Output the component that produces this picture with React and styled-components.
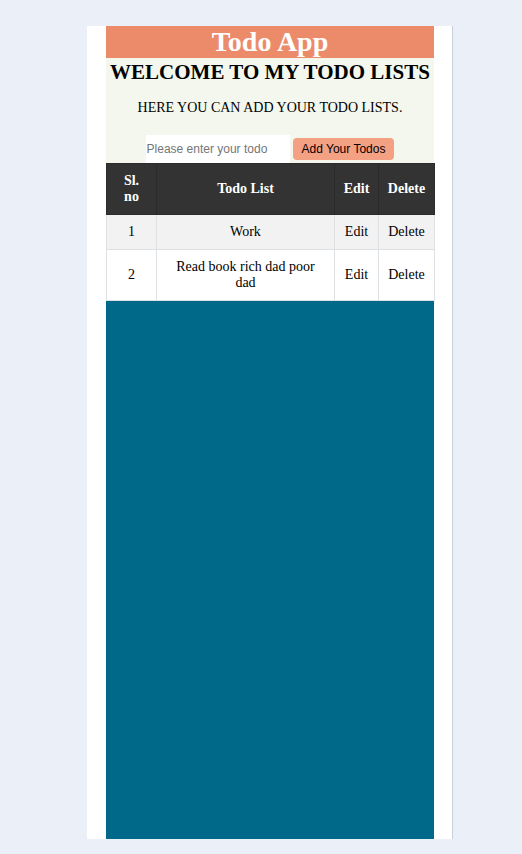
import React from "react";
import styled, { createGlobalStyle } from "styled-components";

const GlobalStyle = createGlobalStyle`
  html, body {
    margin: 0;
    padding: 0;
    background: #ebeff8;
    font-family: "Liberation Serif", "Times New Roman", serif;
  }
`;

const todos = [
  { id: 1, text: "Work" },
  { id: 2, text: "Read book rich dad poor dad" },
];

function App() {
  return (
    <>
      <GlobalStyle />
      <Page>
        <Panel>
          <Column>
            <Title>Todo App</Title>
            <Intro>
              <Welcome>WELCOME TO MY TODO LISTS</Welcome>
              <Subtitle>HERE YOU CAN ADD YOUR TODO LISTS.</Subtitle>
              <Form>
                <Input placeholder="Please enter your todo" />
                <AddButton>Add Your Todos</AddButton>
              </Form>
            </Intro>
            <Table>
              <thead>
                <tr>
                  <Th w={50}>Sl.<br />no</Th>
                  <Th w={178}>Todo List</Th>
                  <Th w={44}>Edit</Th>
                  <Th w={56}>Delete</Th>
                </tr>
              </thead>
              <tbody>
                {todos.map((t) => (
                  <Row key={t.id}>
                    <Td>{t.id}</Td>
                    <Td wide>{t.text}</Td>
                    <Td>Edit</Td>
                    <Td>Delete</Td>
                  </Row>
                ))}
              </tbody>
            </Table>
            <Footer />
          </Column>
        </Panel>
      </Page>
    </>
  );
}

export default App;

const Page = styled.div`
  padding: 26px 0 15px 87px;
`;

const Panel = styled.div`
  width: 328px;
  height: 813px;
  background: #fff;
  padding: 0 18px 0 19px;
  border-right: 1px solid #c9d0da;
  display: flex;
`;

const Column = styled.div`
  width: 328px;
  display: flex;
  flex-direction: column;
`;

const Title = styled.h1`
  margin: 0;
  background: #ec8b6a;
  color: #fff;
  font-size: 28px;
  line-height: 32px;
  text-align: center;
`;

const Intro = styled.div`
  background: #f3f7ed;
  text-align: center;
`;

const Welcome = styled.h2`
  margin: 0;
  font-size: 21px;
  line-height: 28px;
  color: #000;
`;

const Subtitle = styled.p`
  margin: 14px 0 19px;
  font-size: 14px;
  line-height: 16px;
`;

const Form = styled.div`
  display: flex;
  justify-content: center;
  align-items: center;
  gap: 3px;
`;

const Input = styled.input`
  width: 144px;
  height: 28px;
  box-sizing: border-box;
  border: none;
  outline: none;
  padding: 0 1px;
  background: #fff;
  font-family: "Liberation Sans", Arial, sans-serif;
  font-size: 12px;
  &::placeholder {
    color: #757575;
  }
`;

const AddButton = styled.button`
  height: 22px;
  padding: 0 9px;
  border: none;
  border-radius: 4px;
  background: #f4a083;
  color: #000;
  font-family: "Liberation Sans", Arial, sans-serif;
  font-size: 12px;
`;

const Table = styled.table`
  width: 328px;
  border-collapse: collapse;
  table-layout: fixed;
  font-size: 14px;
  line-height: 16px;
`;

const Th = styled.th`
  width: ${(p) => p.w}px;
  box-sizing: border-box;
  background: #333;
  color: #fff;
  padding: 9px 4px 9px;
  border: 1px solid #2b2b2b;
  font-weight: bold;
  text-align: center;
`;

const Row = styled.tr`
  background: #fff;
  &:nth-child(odd) {
    background: #f2f2f2;
  }
`;

const Td = styled.td`
  padding: 9px ${(p) => (p.wide ? "16px" : "4px")};
  border: 1px solid #dde1e3;
  text-align: center;
  color: #000;
`;

const Footer = styled.div`
  flex: 1;
  background: #006989;
`;
